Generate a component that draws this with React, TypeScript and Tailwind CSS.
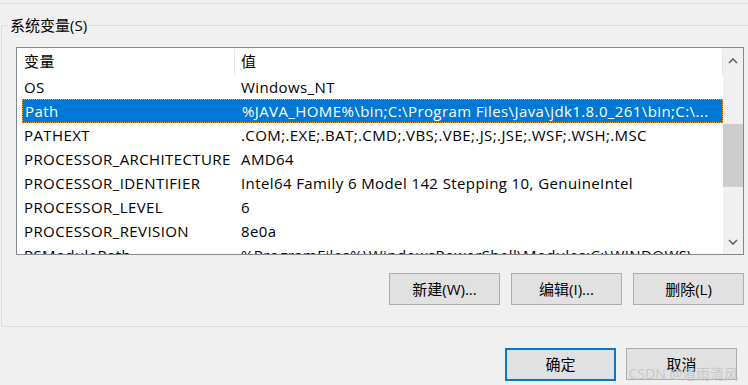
const rows = [
  { name: "OS", value: "Windows_NT" },
  { name: "Path", value: "%JAVA_HOME%\\bin;C:\\Program Files\\Java\\jdk1.8.0_261\\bin;C:\\...", selected: true },
  { name: "PATHEXT", value: ".COM;.EXE;.BAT;.CMD;.VBS;.VBE;.JS;.JSE;.WSF;.WSH;.MSC" },
  { name: "PROCESSOR_ARCHITECTURE", value: "AMD64" },
  { name: "PROCESSOR_IDENTIFIER", value: "Intel64 Family 6 Model 142 Stepping 10, GenuineIntel" },
  { name: "PROCESSOR_LEVEL", value: "6" },
  { name: "PROCESSOR_REVISION", value: "8e0a" },
  { name: "PSModulePath", value: "%ProgramFiles%\\WindowsPowerShell\\Modules;C:\\WINDOWS\\..." },
];

const Chevron = ({ up }: { up?: boolean }) => (
  <svg width="10" height="6" viewBox="0 0 10 6" className="text-[#606060]">
    <path
      d={up ? "M1 5 L5 1 L9 5" : "M1 1 L5 5 L9 1"}
      fill="none"
      stroke="currentColor"
      strokeWidth="1.6"
    />
  </svg>
);

const Btn = ({ label, primary }: { label: string; primary?: boolean }) => (
  <button
    className={
      "w-[111px] h-[32px] bg-[#e1e1e1] text-[15px] text-black flex items-center justify-center " +
      (primary ? "border-2 border-[#0078d7] h-[33px]" : "border border-[#adadad]")
    }
  >
    {label}
  </button>
);

const App = () => {
  return (
    <div
      className="relative w-[748px] h-[385px] overflow-hidden bg-[#f0f0f0] text-black"
      style={{ fontFamily: "'Open Sans', 'Noto Sans CJK SC', sans-serif" }}
    >
      <div className="mt-[3px] border-t border-[#dcdcdc] w-[760px]" />

      <fieldset className="mt-[11px] ml-[1px] w-[760px] h-[312px] border border-[#dcdcdc] pl-[6px]">
        <legend className="px-[2px] text-[15px] leading-[20px]">系统变量(S)</legend>

        <div className="ml-[8px] mt-[12px] w-[728px] h-[208px] border border-[#828790] bg-white flex">
          <div className="flex-1 overflow-hidden text-[15px] tracking-[0.4px]">
            <div className="flex h-[27px] items-center">
              <div className="w-[218px] pl-[7px] border-r border-[#e5e5e5] h-[26px] flex items-center">变量</div>
              <div className="flex-1 pl-[6px] border-r border-[#e5e5e5] h-[26px] flex items-center">值</div>
            </div>
            {rows.map((r) => (
              <div
                key={r.name}
                className={
                  "flex h-[24px] items-center ml-[5px] whitespace-nowrap " +
                  (r.selected ? "bg-[#0078d7] text-white border border-dotted border-[#ff9c2a]" : "")
                }
              >
                <div className="w-[213px] pl-[2px] shrink-0">{r.name}</div>
                <div className="pl-[6px] overflow-hidden">{r.value}</div>
              </div>
            ))}
          </div>
          <div className="w-[20px] bg-[#f0f0f0] flex flex-col items-center">
            <div className="h-[26px] flex items-center justify-center">
              <Chevron up />
            </div>
            <div className="mt-[50px] w-full h-[63px] bg-[#cdcdcd]" />
            <div className="flex-1" />
            <div className="h-[24px] flex items-center justify-center">
              <Chevron />
            </div>
          </div>
        </div>

        <div className="flex gap-[11px] ml-[381px] mt-[18px]">
          <Btn label="新建(W)..." />
          <Btn label="编辑(I)..." />
          <Btn label="删除(L)" />
        </div>
      </fieldset>

      <div className="flex gap-[10px] ml-[505px] mt-[21px]">
        <Btn label="确定" primary />
        <Btn label="取消" />
      </div>

      <div className="absolute right-[10px] bottom-[1px] text-[14px] text-[#c4c4c4]/90 pointer-events-none">
        CSDN @道雨清风
      </div>
    </div>
  );
};

export default App;
